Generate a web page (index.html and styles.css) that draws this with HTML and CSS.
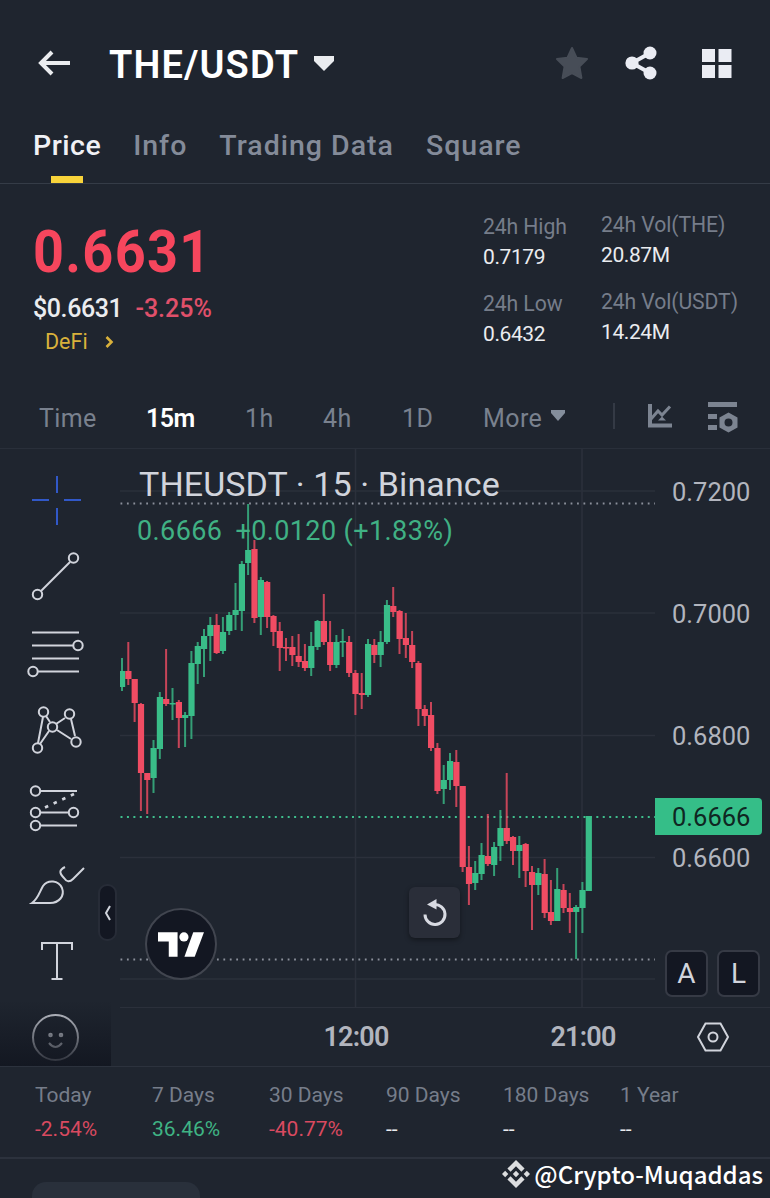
FILE: index.html
```html
<!DOCTYPE html>
<html lang="en">
<head>
    <meta charset="UTF-8">
    <meta name="viewport" content="width=device-width, initial-scale=1.0">
    <title>THE/USDT</title>
    <link rel="stylesheet" href="styles.css">
</head>
<body>
    <header>
        <svg class="back" width="34" height="28" viewBox="0 0 34 28"><path d="M33 14H4M15 3L4 14l11 11" fill="none" stroke="#eaecef" stroke-width="4"/></svg>
        <h1>THE/USDT</h1>
        <svg class="pair-arrow" width="20" height="16" viewBox="0 0 20 16"><path d="M0 1h20v5L10 16 0 6z" fill="#eaecef"/></svg>
        <div class="header-icons">
            <svg width="34" height="34" viewBox="0 0 34 34"><path d="M17 2l4.500 9.700 10.500 1.300-7.600 7.500 2 11.500L17 27l-9.400 5 2-11.500L2 13l10.500-1.300z" fill="#474d57" stroke="#474d57" stroke-width="2" stroke-linejoin="round"/></svg>
            <svg width="32" height="34" viewBox="0 0 32 34"><path d="M25 7L7 17l18 10" fill="none" stroke="#eaecf3" stroke-width="4"/><circle cx="7" cy="17" r="6.600" fill="#eaecf3"/><circle cx="25" cy="7" r="6.500" fill="#eaecf3"/><circle cx="25" cy="27" r="6.500" fill="#eaecf3"/></svg>
            <svg width="30" height="30" viewBox="0 0 30 30"><path d="M0 1h13v13H0zM16.500 1h13v13h-13zM0 17h13v13H0zM16.500 17h13v13h-13z" fill="#eaecf3"/></svg>
        </div>
    </header>

    <nav>
        <a class="active">Price</a>
        <a>Info</a>
        <a>Trading Data</a>
        <a>Square</a>
    </nav>

    <section class="ticker">
        <div class="price-block">
            <div class="price">0.6631</div>
            <div class="sub-price"><span>$0.6631</span><span class="change">-3.25%</span></div>
            <div class="tag">DeFi <svg width="9" height="14" viewBox="0 0 9 14"><path d="M1.500 2l5 5-5 5" fill="none" stroke="#d9b13b" stroke-width="2.600"/></svg></div>
        </div>
        <div class="stats">
            <div class="stats-col">
                <div class="label">24h High</div>
                <div class="value">0.7179</div>
                <div class="label">24h Low</div>
                <div class="value">0.6432</div>
            </div>
            <div class="stats-col vol">
                <div class="label">24h Vol(THE)</div>
                <div class="value">20.87M</div>
                <div class="label">24h Vol(USDT)</div>
                <div class="value">14.24M</div>
            </div>
        </div>
    </section>

    <div class="intervals">
        <span>Time</span>
        <span class="active">15m</span>
        <span>1h</span>
        <span>4h</span>
        <span>1D</span>
        <span>More <svg width="14" height="11" viewBox="0 0 14 11"><path d="M0 0h14v3L7 11 0 3z" fill="#848e9c"/></svg></span>
        <i class="divider"></i>
        <svg class="chart-icon" width="24" height="24" viewBox="0 0 24 24"><path d="M2 0v21.500h22" fill="none" stroke="#7c8491" stroke-width="4"/><path d="M3 15l7-8 4 4 8-8.500" fill="none" stroke="#7c8491" stroke-width="3"/><path d="M10 16.500l4-4 4 4z" fill="#7c8491"/></svg>
        <svg width="30" height="31" viewBox="0 0 30 31"><path d="M0 0h29v5H0zM0 12h9v5H0zM0 23h9v5H0z" fill="#7c8491"/><path fill-rule="evenodd" d="M20.500 10.500l9 5v10l-9 5-9-5v-10zM20.500 16.500a4 4 0 1 0 0 8a4 4 0 1 0 0-8z" fill="#7c8491"/></svg>
    </div>

    <main>
        <aside class="tools">
            <svg width="110" height="617" viewBox="0 449 110 617" fill="none" stroke="#d1d4dc" stroke-width="2">
                <g stroke="#3158c8">
                    <path d="M57 476v17M57 508v17M32 500h17M64 500h17"/>
                </g>
                <path d="M41 591l29-29"/>
                <circle cx="37.500" cy="594.500" r="4.700"/><circle cx="73.500" cy="558" r="4.700"/>
                <path d="M32 632.500h47M32 645.500h41M32 658.500h47M38 671.500h41"/>
                <circle cx="78" cy="645.500" r="4.700"/><circle cx="33" cy="671.500" r="4.700"/>
                <path d="M43 717l-5 26M46 716l4 6M56 724l9-6M71 719l4 17M57 730l14 9M49 731l-9 13"/>
                <circle cx="43.500" cy="712" r="4.700"/><circle cx="69.500" cy="714" r="4.700"/><circle cx="52.500" cy="727" r="4.700"/><circle cx="76" cy="742" r="4.700"/><circle cx="37.500" cy="748" r="4.700"/>
                <path d="M40 791h37M40 812.500h29M40 825.500h37"/>
                <path d="M45 807.500l30-14" stroke-width="2.600" stroke-dasharray="3.500 6"/>
                <circle cx="35.500" cy="791" r="4.700"/><circle cx="35.500" cy="812.500" r="4.700"/><circle cx="73.500" cy="812.500" r="4.700"/><circle cx="35.500" cy="825.500" r="4.700"/>
                <path d="M32 903c6-4 8-12 11-17a11 11 0 0 1 19 2c3 8-3 15-12 15z"/>
                <path d="M65 867c-6 3-6 6-1 11q4 6 9 1l11-11"/>
                <path d="M42 950v-7h30v7M57 943v36M51.500 979h11"/>
                <g class="smile">
                    <circle cx="55.500" cy="1037.500" r="22.500"/>
                    <path d="M49 1043q6.500 8 13 0"/>
                    <circle cx="50.500" cy="1035" r="1.300"/><circle cx="61" cy="1035" r="1.300"/>
                </g>
            </svg>
            <div class="tools-fade"></div>
            <div class="handle"><svg width="8" height="16" viewBox="0 0 8 16"><path d="M6 1L2 8l4 7" fill="none" stroke="#d1d4dc" stroke-width="2"/></svg></div>
        </aside>

        <div class="plot">
            <svg id="candles" width="535" height="558" viewBox="120 449 535 558">
                <g stroke="#2b303b" stroke-width="1.600">
                    <path d="M120 491h535M120 613h535M120 735.500h535M120 857.500h535M120 979h535"/>
                    <path d="M355.500 449v558M582 449v558"/>
                </g>
                <path d="M120.500 503.500h535M120.500 959.500h535" stroke="#8b909b" stroke-width="1.800" stroke-dasharray="1.800 4.630"/>
                <path d="M120.500 817h535" stroke="#3fbf8d" stroke-width="2" stroke-dasharray="2 4.430"/>
            </svg>
            <div class="legend">
                <div class="symbol">THEUSDT · 15 · Binance</div>
                <div class="quote"><span>0.6666</span><span>+0.0120 (+1.83%)</span></div>
            </div>
            <div class="tv-logo">
                <svg width="46" height="25" viewBox="0 0 47 25" fill="#fff"><path d="M0 0h20v25h-9V9.500H0z"/><circle cx="26.500" cy="4.800" r="4.700"/><path d="M36 0h11L37.500 25H27z"/></svg>
            </div>
            <div class="reset"><svg width="26" height="30" viewBox="0 0 26 30"><path d="M3 16.500A10 10 0 1 0 12 6.500" fill="none" stroke="#d8dae2" stroke-width="3"/><path d="M5 6.500L14.500 1v10.500z" fill="#d8dae2"/></svg></div>
        </div>

        <div class="price-axis">
            <span>0.7200</span>
            <span>0.7000</span>
            <span>0.6800</span>
            <span>0.6600</span>
            <div class="last-price">0.6666</div>
            <div class="scale-buttons"><b>A</b><b>L</b></div>
        </div>

        <div class="time-axis">
            <span class="noon">12:00</span>
            <span class="night">21:00</span>
            <svg width="32" height="30" viewBox="0 0 32 30" fill="none" stroke="#d1d4dc" stroke-width="2"><path d="M8.500 1.500h15L31 15l-7.500 13.500h-15L1 15z"/><circle cx="16" cy="15" r="4.500"/></svg>
        </div>
    </main>

    <section class="performance">
        <div><span>Today</span><span class="down">-2.54%</span></div>
        <div><span>7 Days</span><span class="up">36.46%</span></div>
        <div><span>30 Days</span><span class="down">-40.77%</span></div>
        <div><span>90 Days</span><span>--</span></div>
        <div><span>180 Days</span><span>--</span></div>
        <div><span>1 Year</span><span>--</span></div>
    </section>

    <footer>
        <div class="next-panel"></div>
        <div class="author">
            <svg width="28" height="28" viewBox="0 0 24 24" fill="#dcdddf"><path d="M16.620 13.920l2.720 2.720L12 24l-7.360-7.360 2.720-2.720L12 18.580zM21.270 9.280L24 12l-2.730 2.720L18.570 12zM12 9.280L14.700 12 12 14.700 9.270 12zM2.720 9.280L5.410 12l-2.690 2.700L0 12zM12 0l7.340 7.340-2.720 2.720L12 5.420l-4.640 4.660-2.720-2.720z"/></svg>
            <span>@Crypto-Muqaddas</span>
        </div>
    </footer>

    <script>
        // [high, body top, body bottom, low, up]
        const candles = [
            [658,671,687,691,1],[642,671,679,685,0],[679,679,703,722,0],[703,704,773,811,0],[773,773,780,814,0],
            [740,748,778,793,1],[692,697,749,759,1],[649,699,704,706,0],[688,703,704,720,1],[700,702,718,748,0],
            [712,715,718,747,1],[651,663,716,739,1],[642,646,664,684,1],[629,636,649,677,1],[617,625,636,661,1],
            [614,625,653,654,0],[617,632,651,654,1],[612,615,631,635,1],[583,610,615,630,1],[561,564,611,631,1],
            [504,550,563,575,1],[540,549,618,623,0],[577,580,617,635,1],[581,582,617,628,0],[615,616,632,646,0],
            [622,631,648,671,0],[638,647,648,661,0],[636,647,655,666,0],[634,656,662,667,0],[644,661,668,671,0],
            [632,646,668,676,1],[620,621,647,650,1],[594,621,642,645,0],[621,642,665,671,0],[635,642,665,668,1],
            [629,641,642,657,1],[636,642,673,677,0],[670,673,694,715,0],[673,693,695,709,0],[639,644,695,697,1],
            [639,645,655,663,0],[631,642,655,667,1],[600,605,642,644,1],[587,606,612,617,0],[610,611,639,654,0],
            [613,638,645,658,0],[631,645,662,668,0],[661,663,709,726,0],[705,709,716,726,0],[702,715,748,751,0],
            [743,748,791,794,0],[765,780,789,804,1],[753,761,780,790,1],[750,762,786,807,0],[786,786,867,872,0],
            [846,867,884,905,0],[861,873,883,890,1],[843,855,874,880,1],[814,856,864,866,0],[842,847,865,876,1],
            [810,828,846,861,1],[773,828,841,844,0],[836,837,851,865,0],[836,845,851,878,1],[843,844,871,887,0],
            [866,872,885,930,0],[868,873,885,895,1],[859,874,913,918,0],[880,912,921,925,0],[868,889,921,921,1],
            [884,890,908,913,0],[893,908,912,933,0],[905,907,912,959,1],[882,890,908,933,1],[816,816,891,891,1]
        ];
        const svg = document.getElementById("candles");

        function addRect(x, y, w, h, cls) {
            const rect = document.createElementNS("http://www.w3.org/2000/svg", "rect");
            rect.setAttribute("x", x.toFixed(1));
            rect.setAttribute("y", y);
            rect.setAttribute("width", w);
            rect.setAttribute("height", h);
            rect.setAttribute("class", cls);
            svg.appendChild(rect);
        }

        candles.forEach(([high, top, bottom, low, up], i) => {
            const x = 122 + i * 6.307;
            const color = up ? "green" : "red";
            addRect(x - 1, high, 2, low - high, color + " wick");
            addRect(x - 3, top, 6.2, Math.max(bottom - top, 1.5), color);
        });
    </script>
</body>
</html>
```
FILE: styles.css
```css
* {
    box-sizing: border-box;
}
body {
    margin: 0;
    width: 770px;
    height: 1198px;
    overflow: hidden;
    background-color: #1f252f;
    color: #eaecef;
    font-family: Roboto, "Liberation Sans", sans-serif;
}
svg {
    display: block;
    flex: none;
}
header {
    display: flex;
    align-items: center;
    height: 126px;
    padding: 0 38px 0 37px;
}
h1 {
    margin: 0 0 0 38px;
    color: #fff;
    font-size: 38px;
    font-weight: 600;
    line-height: 44px;
    letter-spacing: 1.1px;
    padding-top: 4px;
}
.pair-arrow {
    margin-left: 15px;
}
.header-icons {
    display: flex;
    align-items: center;
    margin-left: auto;
}
.header-icons svg:nth-child(2) {
    margin: 0 45px 0 36px;
}
nav {
    display: flex;
    gap: 32px;
    height: 58px;
    padding-left: 33px;
    border-bottom: 1px solid #353c47;
}
nav a {
    position: relative;
    color: #848b99;
    font-size: 28.5px;
    font-weight: 500;
    line-height: 39px;
    letter-spacing: 1px;
}
nav .active {
    color: #f0f1f5;
    letter-spacing: 0.5px;
}
nav .active::after {
    content: "";
    position: absolute;
    left: 18px;
    bottom: 0;
    width: 32px;
    height: 7px;
    background-color: #f8d33a;
}
.ticker {
    display: flex;
    justify-content: space-between;
    height: 202px;
    padding: 30px 33px 0 33px;
}
.price {
    margin-top: 7px;
    color: #f6465d;
    font-size: 60px;
    font-weight: 700;
    line-height: 62px;
    letter-spacing: 1.5px;
    transform: scaleX(0.9);
    transform-origin: left;
}
.sub-price {
    display: flex;
    gap: 13px;
    margin-top: 11px;
    font-size: 25px;
    font-weight: 500;
    line-height: 30px;
    letter-spacing: -0.4px;
}
.change {
    color: #e0506a;
    letter-spacing: 0;
}
.tag {
    display: flex;
    align-items: center;
    gap: 17px;
    margin: 5px 0 0 12px;
    color: #d9b13b;
    font-size: 21.5px;
    line-height: 26px;
}
.stats {
    display: flex;
}
.stats-col {
    width: 118px;
    letter-spacing: -0.1px;
}
.stats-col.vol {
    width: 136px;
    margin-top: -2px;
    white-space: nowrap;
}
.label {
    color: #767d8a;
    font-size: 21.2px;
    line-height: 26px;
}
.value {
    margin: 4px 0 21px;
    font-size: 21px;
    line-height: 26px;
    letter-spacing: -0.4px;
}
.intervals {
    display: grid;
    grid-template-columns: 107px 99px 78px 79px 81px 130px 35px 60px 30px;
    align-items: center;
    height: 63px;
    padding-left: 39px;
    border-bottom: 1px solid #292f3a;
    color: #79818e;
    font-size: 25px;
    line-height: 30px;
    letter-spacing: 0.4px;
}
.intervals span {
    padding-top: 3px;
}
.intervals .active {
    color: #fff;
    font-weight: 600;
    letter-spacing: -0.5px;
}
.intervals span svg {
    display: inline-block;
    margin: 0 0 6px 2px;
}
.divider {
    width: 2px;
    height: 26px;
    margin-bottom: 3px;
    background-color: #343a45;
}
.chart-icon {
    margin-bottom: 2px;
}
main {
    display: grid;
    grid-template-columns: 120px 535px 115px;
    grid-template-rows: 558px 59px;
    height: 617px;
}
.tools {
    position: relative;
    grid-row: 1 / 3;
}
.tools-fade {
    position: absolute;
    left: 0;
    bottom: 0;
    width: 111px;
    height: 66px;
    background: linear-gradient(rgba(18, 22, 32, 0), rgba(18, 22, 32, 0.9));
}
.handle {
    position: absolute;
    left: 98px;
    top: 435px;
    display: flex;
    align-items: center;
    justify-content: center;
    width: 19px;
    height: 57px;
    border: 2px solid #272c37;
    border-radius: 9px;
    background-color: #131722;
}
.plot {
    position: relative;
}
.red {
    fill: #f04c63;
}
.green {
    fill: #39bd88;
}
.wick {
    opacity: 0.8;
}
.legend {
    position: absolute;
    left: 17px;
    top: 15px;
    white-space: nowrap;
}
.symbol {
    padding-left: 2px;
    color: #d1d4dc;
    font-size: 34px;
    line-height: 40px;
    letter-spacing: 0.1px;
}
.quote {
    display: flex;
    gap: 13px;
    margin-top: 11px;
    color: #40b184;
    font-size: 27px;
    line-height: 32px;
    letter-spacing: 0.4px;
}
.tv-logo {
    position: absolute;
    left: 25px;
    top: 459px;
    display: flex;
    align-items: center;
    justify-content: center;
    width: 72px;
    height: 72px;
    border: 2px solid #41454f;
    border-radius: 50%;
    background-color: #131722;
}
.reset {
    position: absolute;
    left: 289px;
    top: 438px;
    display: flex;
    align-items: center;
    justify-content: center;
    width: 51px;
    height: 51px;
    border-radius: 6px;
    background-color: #2a2e39;
    box-shadow: 0 2px 5px rgba(0, 0, 0, 0.4);
}
.price-axis {
    position: relative;
    display: flex;
    flex-direction: column;
    gap: 92px;
    padding: 28px 0 0 17px;
    color: #b2b5be;
    font-size: 25.5px;
    line-height: 30px;
}
.last-price {
    position: absolute;
    left: 0;
    top: 349px;
    width: 107px;
    height: 37px;
    padding-left: 17px;
    border-radius: 0 4px 4px 0;
    background-color: #35be88;
    color: #0f2622;
    line-height: 39px;
}
.scale-buttons {
    position: absolute;
    left: 10px;
    top: 501px;
    display: flex;
    gap: 9px;
}
.scale-buttons b {
    width: 43px;
    height: 47px;
    border: 2px solid #363a45;
    border-radius: 7px;
    background-color: #131722;
    color: #d1d4dc;
    font-size: 28px;
    font-weight: 400;
    line-height: 43px;
    text-align: center;
}
.time-axis {
    grid-column: 2 / 4;
    display: grid;
    grid-template-columns: 347px 115px 1fr;
    align-items: center;
    border-top: 1px solid #2b303b;
    color: #b2b5be;
    font-size: 27px;
    font-weight: 600;
    line-height: 32px;
    letter-spacing: -0.8px;
}
.time-axis .noon {
    width: 120px;
    margin-left: 176px;
    text-align: center;
}
.time-axis .night {
    width: 120px;
    margin-left: 56px;
    text-align: center;
}
.time-axis svg {
    margin-left: 115px;
}
.performance {
    display: grid;
    grid-template-columns: repeat(6, 117px);
    height: 93px;
    padding: 14px 0 0 35px;
    border-top: 1px solid #2c323d;
    border-bottom: 2px solid #2c323d;
    font-size: 21px;
}
.performance span {
    display: block;
    height: 34px;
    line-height: 28px;
    white-space: nowrap;
}
.performance span:first-child {
    color: #767d8a;
}
.performance .down {
    color: #d94a60;
}
.performance .up {
    color: #3fb484;
}
footer {
    display: flex;
    justify-content: space-between;
    padding: 0 7px 0 32px;
}
.next-panel {
    width: 168px;
    height: 30px;
    margin-top: 23px;
    border-radius: 14px;
    background-color: #29303b;
}
.author {
    display: flex;
    align-items: center;
    gap: 4px;
    height: 30px;
    color: #fff;
    font-family: "Noto Sans CJK SC", "Noto Sans", sans-serif;
    font-size: 24px;
    font-weight: 500;
    line-height: 30px;
}
```
